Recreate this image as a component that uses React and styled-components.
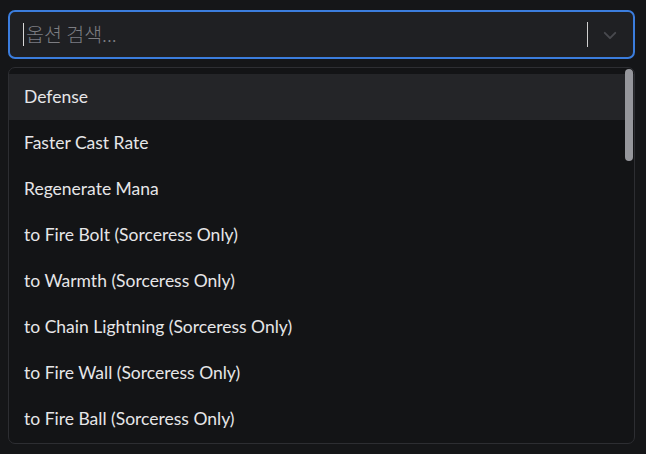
import React from 'react';
import styled, { createGlobalStyle } from 'styled-components';

const options = [
  'Defense',
  'Faster Cast Rate',
  'Regenerate Mana',
  'to Fire Bolt (Sorceress Only)',
  'to Warmth (Sorceress Only)',
  'to Chain Lightning (Sorceress Only)',
  'to Fire Wall (Sorceress Only)',
  'to Fire Ball (Sorceress Only)',
];

const GlobalStyle = createGlobalStyle`
  html, body {
    margin: 0;
    background: #151618;
  }
  body {
    font-family: Lato, 'Noto Sans CJK KR', sans-serif;
  }
`;

const App = () => {
  return (
    <>
      <GlobalStyle />
      <Wrapper>
        <SearchBox>
          <Caret />
          <Placeholder>옵션 검색...</Placeholder>
          <Divider />
          <Chevron viewBox='0 0 16 10'>
            <path d='M2 2l6 6 6-6' fill='none' stroke='#48494e' strokeWidth='2.2' strokeLinecap='round' strokeLinejoin='round' />
          </Chevron>
        </SearchBox>
        <Menu>
          <List>
            {options.map((name, i) => (
              <Option key={name} active={i === 0}>
                {name}
              </Option>
            ))}
          </List>
          <ScrollThumb />
        </Menu>
      </Wrapper>
    </>
  );
};
export default App;

const Wrapper = styled.div`
  display: flex;
  flex-direction: column;
  gap: 8px;
  padding: 10px 11px 10px 8px;
`;

const SearchBox = styled.div`
  display: flex;
  align-items: center;
  height: 45px;
  border: 2px solid #3b7ddd;
  border-radius: 7px;
  background: #1f2023;
  padding: 0 0 0 13px;
`;

const Caret = styled.span`
  width: 1px;
  height: 23px;
  background: #d8d8d8;
`;

const Placeholder = styled.span`
  flex: 1;
  font-family: 'Noto Sans CJK KR', sans-serif;
  font-size: 19.5px;
  font-weight: 300;
  color: #7c7d82;
  margin: -2px 0 0 2px;
`;

const Divider = styled.span`
  width: 1px;
  height: 25px;
  background: #cfcfcf;
`;

const Chevron = styled.svg`
  width: 14px;
  height: 9px;
  margin: 2px 16px 0 15px;
`;

const Menu = styled.div`
  position: relative;
  height: 375px;
  border: 1px solid #2d2e32;
  border-radius: 7px;
  background: #131416;
  overflow: hidden;
`;

const List = styled.ul`
  list-style: none;
  margin: 0;
  padding: 6px 0 0 0;
`;

const Option = styled.li`
  display: flex;
  align-items: center;
  box-sizing: border-box;
  height: 46px;
  padding: 0 15px 2px;
  font-size: 17.5px;
  color: #e6e6e8;
  background: ${(p) => (p.active ? '#242528' : 'transparent')};
`;

const ScrollThumb = styled.div`
  position: absolute;
  top: 1px;
  right: 1px;
  width: 8px;
  height: 92px;
  border-radius: 4px;
  background: #96979c;
`;
